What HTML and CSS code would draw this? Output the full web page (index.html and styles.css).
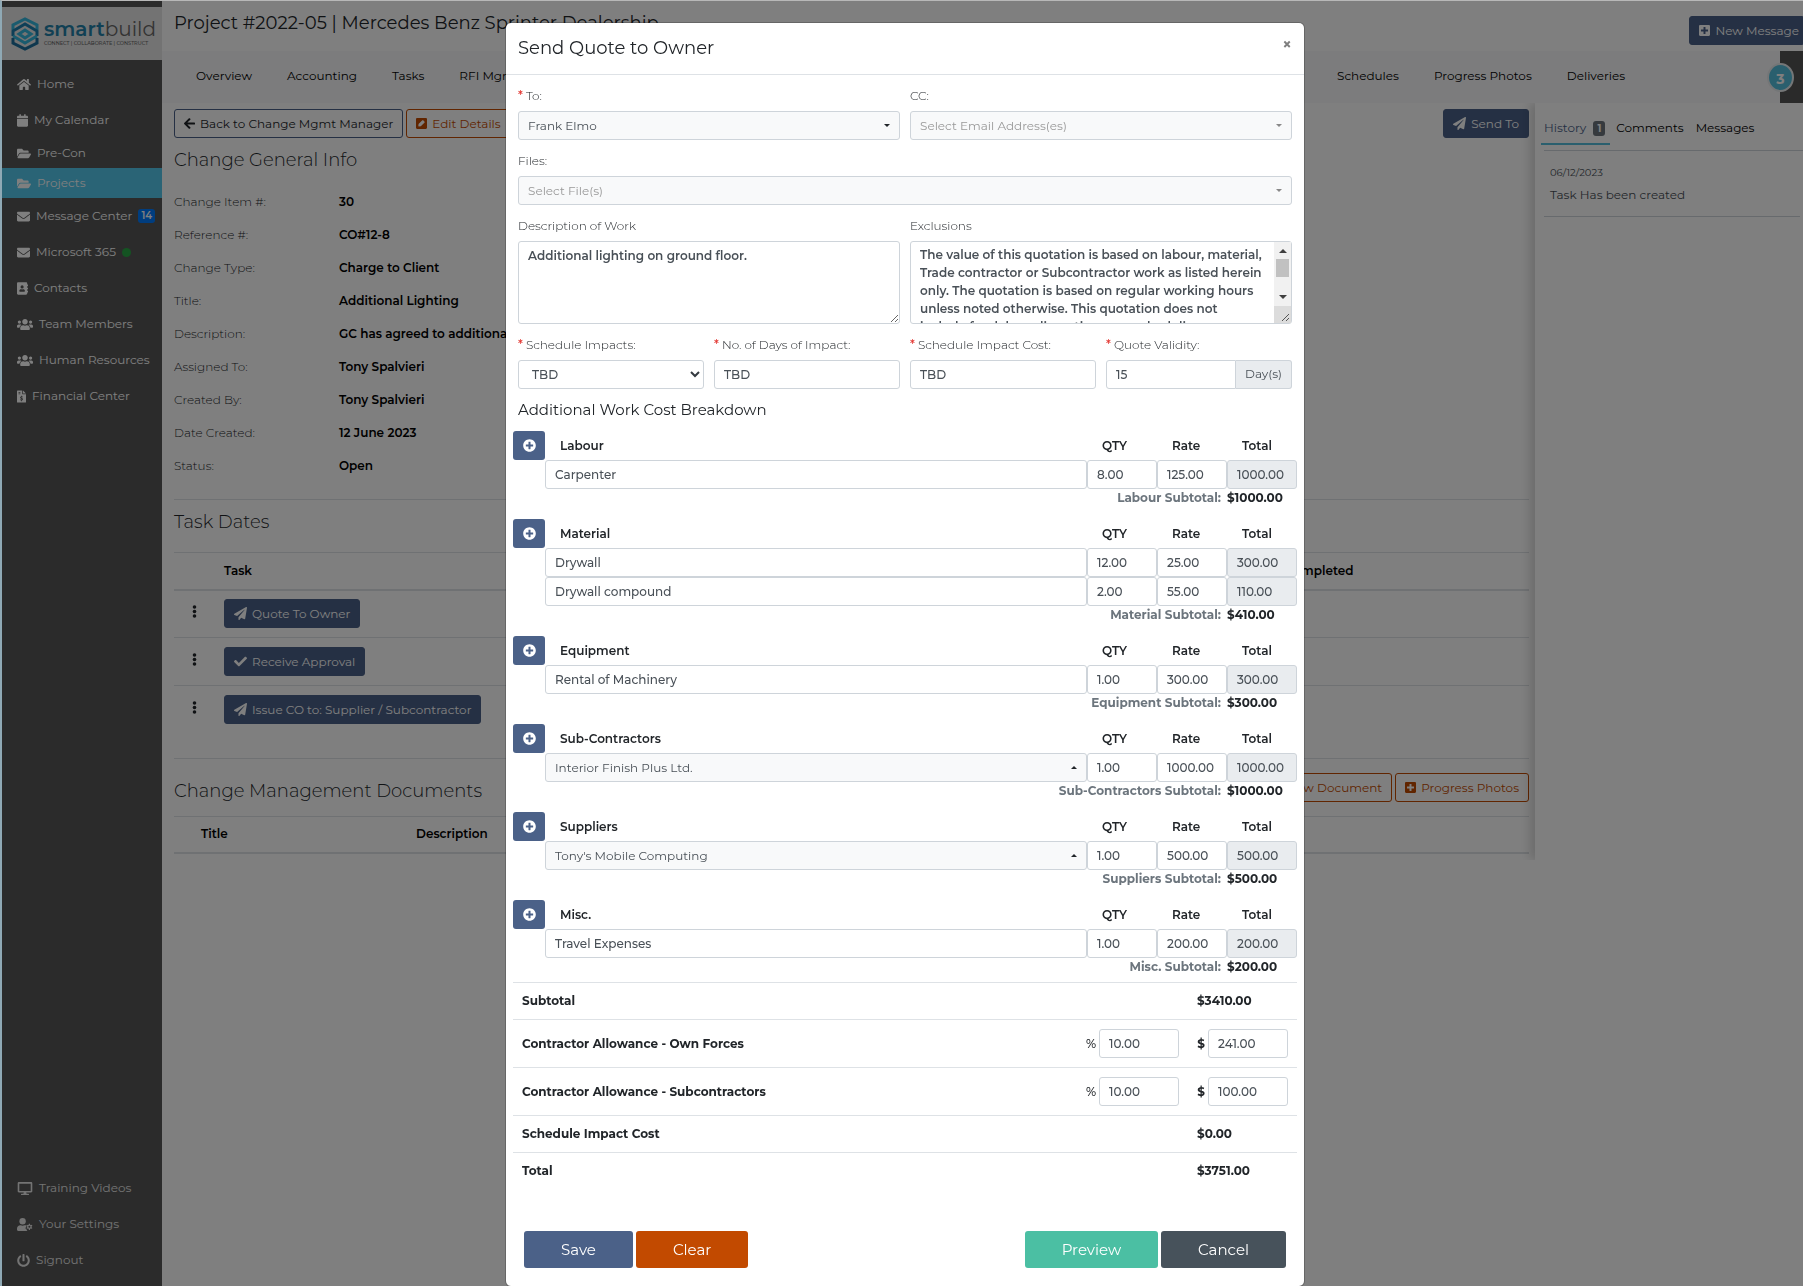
FILE: index.html
```html
<!DOCTYPE html>
<html lang="en">
<head>
<meta charset="UTF-8">
<meta name="viewport" content="width=device-width, initial-scale=1">
<title>Smartbuild - Send Quote to Owner</title>
<link rel="stylesheet" href="styles.css">
</head>
<body>
<svg class="sprite" aria-hidden="true">
    <symbol id="i-home" viewBox="0 0 576 512"><path d="M280.37 148.26L96 300.11V464a16 16 0 0 0 16 16l112.06-.29a16 16 0 0 0 15.92-16V368a16 16 0 0 1 16-16h64a16 16 0 0 1 16 16v95.64a16 16 0 0 0 16 16.05L464 480a16 16 0 0 0 16-16V300L295.67 148.26a12.19 12.19 0 0 0-15.3 0zM571.6 251.47L488 182.56V44.05a12 12 0 0 0-12-12h-56a12 12 0 0 0-12 12v72.61L318.47 43a48 48 0 0 0-61 0L4.34 251.47a12 12 0 0 0-1.6 16.9l25.5 31A12 12 0 0 0 45.15 301l235.22-193.74a12.19 12.19 0 0 1 15.3 0L530.9 301a12 12 0 0 0 16.9-1.6l25.5-31a12 12 0 0 0-1.7-16.93z"/></symbol>
    <symbol id="i-calendar" viewBox="0 0 448 512"><path d="M12 192h424c6.6 0 12 5.4 12 12v260c0 26.5-21.5 48-48 48H48c-26.5 0-48-21.5-48-48V204c0-6.6 5.4-12 12-12zm436-44v-36c0-26.5-21.5-48-48-48h-48V12c0-6.6-5.4-12-12-12h-40c-6.6 0-12 5.4-12 12v52H160V12c0-6.6-5.4-12-12-12h-40c-6.6 0-12 5.4-12 12v52H48C21.5 64 0 85.5 0 112v36c0 6.6 5.4 12 12 12h424c6.6 0 12-5.4 12-12z"/></symbol>
    <symbol id="i-folder" viewBox="0 0 576 512"><path d="M572.694 292.093L500.27 416.248A63.997 63.997 0 0 1 444.989 448H45.025c-18.523 0-30.064-20.093-20.731-36.093l72.424-124.155A64 64 0 0 1 152 256h399.964c18.523 0 30.064 20.093 20.73 36.093zM152 224h328v-48c0-26.51-21.49-48-48-48H272l-64-64H48C21.49 64 0 85.49 0 112v278.046l69.077-118.418C86.214 242.25 117.989 224 152 224z"/></symbol>
    <symbol id="i-envelope" viewBox="0 0 512 512"><path d="M502.3 190.8c3.9-3.1 9.7-.2 9.7 4.7V400c0 26.5-21.5 48-48 48H48c-26.5 0-48-21.5-48-48V195.6c0-5 5.7-7.8 9.7-4.7 22.4 17.4 52.1 39.5 154.1 113.6 21.1 15.4 56.7 47.8 92.2 47.6 35.7.3 72-32.8 92.3-47.6 102-74.1 131.6-96.3 154-113.7zM256 320c23.2.4 56.6-29.2 73.4-41.4 132.7-96.3 142.8-104.7 173.4-128.7 5.8-4.5 9.2-11.5 9.2-18.9v-19c0-26.5-21.5-48-48-48H48c-26.5 0-48 21.5-48 48v19c0 7.4 3.4 14.3 9.2 18.9 30.6 23.9 40.7 32.4 173.4 128.7 16.8 12.2 50.2 41.8 73.4 41.4z"/></symbol>
    <symbol id="i-book" viewBox="0 0 448 512"><path fill-rule="evenodd" d="M48 0h320c26 0 48 22 48 48v48h20c7 0 12 5 12 12v40c0 7-5 12-12 12h-20v64h20c7 0 12 5 12 12v40c0 7-5 12-12 12h-20v64h20c7 0 12 5 12 12v40c0 7-5 12-12 12h-20v48c0 26-22 48-48 48H48c-26 0-48-22-48-48V48C0 22 22 0 48 0zm160 128a64 64 0 1 0 0 128 64 64 0 0 0 0-128zM119 384h178c12 0 23-9 23-19v-19c0-32-30-58-67-58-10 0-19 8-45 8s-34-8-45-8c-37 0-67 26-67 58v19c0 10 10 19 23 19z"/></symbol>
    <symbol id="i-users" viewBox="0 0 640 512"><path d="M96 224c35.3 0 64-28.7 64-64s-28.7-64-64-64-64 28.7-64 64 28.7 64 64 64zm448 0c35.3 0 64-28.7 64-64s-28.7-64-64-64-64 28.7-64 64 28.7 64 64 64zm32 32h-64c-17.6 0-33.5 7.1-45.1 18.6 40.3 22.1 68.9 62 75.1 109.4h66c17.7 0 32-14.3 32-32v-32c0-35.3-28.7-64-64-64zm-256 0c61.9 0 112-50.1 112-112S381.9 32 320 32 208 82.1 208 144s50.1 112 112 112zm76.8 32h-8.3c-20.8 10-43.9 16-68.5 16s-47.6-6-68.5-16h-8.3C179.6 288 128 339.6 128 403.2V432c0 26.5 21.5 48 48 48h288c26.5 0 48-21.5 48-48v-28.8c0-63.6-51.6-115.2-115.2-115.2zm-223.7-13.4C161.5 263.1 145.6 256 128 256H64c-35.3 0-64 28.7-64 64v32c0 17.7 14.3 32 32 32h65.9c6.3-47.4 34.9-87.3 75.2-109.4z"/></symbol>
    <symbol id="i-invoice" viewBox="0 0 384 512"><path fill-rule="evenodd" d="M24 0h200v136c0 13 11 24 24 24h136v328c0 13-11 24-24 24H24c-13 0-24-11-24-24V24C0 11 11 0 24 0zm232 0l128 128H256zM64 64v32h80V64zm0 64v32h80v-32zm112 96v32c-50 6-60 84 0 100 40 12 26 32 8 32-16 0-24-8-36-12l-18 30c14 12 28 16 46 18v30h32v-30c56-8 62-86 2-104-38-10-30-30-10-30 14 0 22 6 32 10l18-30c-12-8-26-12-42-14v-32z"/></symbol>
    <symbol id="i-desktop" viewBox="0 0 576 512"><path d="M528 0H48C21.5 0 0 21.5 0 48v320c0 26.5 21.5 48 48 48h192l-16 48h-72c-13.3 0-24 10.7-24 24s10.7 24 24 24h272c13.3 0 24-10.7 24-24s-10.7-24-24-24h-72l-16-48h192c26.5 0 48-21.5 48-48V48c0-26.5-21.5-48-48-48zm-16 352H64V64h448v288z"/></symbol>
    <symbol id="i-usercog" viewBox="0 0 640 512"><circle cx="224" cy="128" r="128"/><path d="M314 288h-9c-50 24-112 24-163 0h-8C60 288 0 348 0 422v42c0 26 22 48 48 48h352c8 0 15-2 21-5-24-14-40-40-40-64l-30-16c-16-12-12-40 14-82 4-8 10-14 16-20l-6-30c-18-5-38-7-61-7z"/><path fill-rule="evenodd" d="M474 224h44l8 42 26 15 40-14 22 38-32 28v30l32 28-22 38-40-14-26 15-8 42h-44l-8-42-26-15-40 14-22-38 32-28v-30l-32-28 22-38 40 14 26-15zm22 82a42 42 0 1 0 0 84 42 42 0 0 0 0-84z"/></symbol>
    <symbol id="i-power" viewBox="0 0 512 512"><path d="M400 54.1c63 45 104 118.6 104 201.9 0 136.8-110.8 247.7-247.5 248C120 504.3 8.2 393 8 256.4 7.9 173.1 48.9 99.3 111.8 54.2c11.7-8.3 28-4.8 35 7.7L162.6 90c5.9 10.5 3.1 23.8-6.6 31-41.5 30.8-68 79.6-68 134.9-.1 92.3 74.5 168.1 168 168.1 91.6 0 168.6-74.2 168-169.1-.3-51.8-24.7-101.8-68.1-134-9.7-7.2-12.4-20.5-6.5-30.9l15.8-28.1c7-12.4 23.2-16.1 34.8-7.8zM296 264V24c0-13.3-10.7-24-24-24h-32c-13.3 0-24 10.7-24 24v240c0 13.3 10.7 24 24 24h32c13.3 0 24-10.7 24-24z"/></symbol>
    <symbol id="i-arrow" viewBox="0 0 448 512"><path d="M257.5 445.1l-22.2 22.2c-9.4 9.4-24.6 9.4-33.9 0L7 273c-9.4-9.4-9.4-24.6 0-33.9L201.4 44.7c9.4-9.4 24.6-9.4 33.9 0l22.2 22.2c9.5 9.5 9.3 25-.4 34.3L136.6 216H424c13.3 0 24 10.7 24 24v32c0 13.3-10.7 24-24 24H136.6l120.5 114.8c9.8 9.3 10 24.8.4 34.3z"/></symbol>
    <symbol id="i-pen" viewBox="0 0 448 512"><path fill-rule="evenodd" d="M48 32h352c26 0 48 22 48 48v352c0 26-22 48-48 48H48c-26 0-48-22-48-48V80c0-26 22-48 48-48zm190 115L104 281l-8 80c-1 12 8 21 19 20l80-9 134-134zm111 36l-56-56c-10-10-26-10-36 0l-18 18 91 91 19-18c10-10 10-25 0-35z"/></symbol>
    <symbol id="i-plane" viewBox="0 0 512 512"><path d="M476 3.2L12.5 270.6c-18.1 10.4-15.8 35.6 2.2 43.2L121 358.4l287.3-253.2c5.5-4.9 13.3 2.6 8.6 8.3L176 407v80.5c0 23.6 28.5 32.9 42.5 15.8L282 426l124.6 52.2c14.2 6 30.4-2.9 33-18.2l72-432C515 7.8 493.3-6.8 476 3.2z"/></symbol>
    <symbol id="i-check" viewBox="0 0 512 512"><path d="M173.898 439.404l-166.4-166.4c-9.997-9.997-9.997-26.206 0-36.204l36.203-36.204c9.997-9.998 26.207-9.998 36.204 0L192 312.69 432.095 72.596c9.997-9.997 26.207-9.997 36.204 0l36.203 36.204c9.997 9.997 9.997 26.206 0 36.204l-294.4 294.401c-9.998 9.997-26.207 9.997-36.204-.001z"/></symbol>
    <symbol id="i-plus-square" viewBox="0 0 448 512"><path d="M400 32H48C21.5 32 0 53.5 0 80v352c0 26.5 21.5 48 48 48h352c26.5 0 48-21.5 48-48V80c0-26.5-21.5-48-48-48zm-32 252c0 6.6-5.4 12-12 12h-92v92c0 6.6-5.4 12-12 12h-56c-6.6 0-12-5.4-12-12v-92H92c-6.6 0-12-5.4-12-12v-56c0-6.6 5.4-12 12-12h92v-92c0-6.6 5.4-12 12-12h56c6.6 0 12 5.4 12 12v92h92c6.6 0 12 5.4 12 12v56z"/></symbol>
    <symbol id="i-plus-circle" viewBox="0 0 512 512"><path d="M256 8C119 8 8 119 8 256s111 248 248 248 248-111 248-248S393 8 256 8zm144 276c0 6.6-5.4 12-12 12h-92v92c0 6.6-5.4 12-12 12h-56c-6.6 0-12-5.4-12-12v-92h-92c-6.6 0-12-5.4-12-12v-56c0-6.6 5.4-12 12-12h92v-92c0-6.6 5.4-12 12-12h56c6.6 0 12 5.4 12 12v92h92c6.6 0 12 5.4 12 12v56z"/></symbol>
    <symbol id="i-dots" viewBox="0 0 192 512"><circle cx="96" cy="80" r="72"/><circle cx="96" cy="256" r="72"/><circle cx="96" cy="432" r="72"/></symbol>
</svg>

<div class="app">
    <aside class="sidebar">
        <a class="logo" href="#">
            <svg class="logo-mark" viewBox="0 0 28 34" aria-hidden="true">
                <g fill="none" stroke-width="3">
                    <path stroke="#35b6dd" d="M2 13V8l12-6 12 6v5"/>
                    <path stroke="#1d7fae" d="M2 19v-5l12-7 12 7v5"/>
                    <path stroke="#35b6dd" d="M8 17l6-4 6 4-6 4z"/>
                    <path stroke="#35b6dd" d="M2 19l12 7 12-7"/>
                    <path stroke="#1d6f9c" d="M2 21v5l12 6 12-6v-5"/>
                </g>
            </svg>
            <span class="logo-text">
                <span class="logo-name"><b>smart</b>build</span>
                <span class="logo-tag">CONNECT | COLLABORATE | CONSTRUCT</span>
            </span>
        </a>
        <nav class="menu">
            <a href="#"><svg class="icon w14"><use href="#i-home"/></svg>Home</a>
            <a href="#"><svg class="icon w11"><use href="#i-calendar"/></svg>My Calendar</a>
            <a href="#" class="short"><svg class="icon w14"><use href="#i-folder"/></svg>Pre-Con</a>
            <a href="#" class="short active"><svg class="icon w14"><use href="#i-folder"/></svg>Projects</a>
            <a href="#"><svg class="icon w13"><use href="#i-envelope"/></svg>Message Center <span class="count">14</span></a>
            <a href="#"><svg class="icon w13"><use href="#i-envelope"/></svg>Microsoft 365 <span class="online"></span></a>
            <a href="#"><svg class="icon w11"><use href="#i-book"/></svg>Contacts</a>
            <a href="#"><svg class="icon w16"><use href="#i-users"/></svg>Team Members</a>
            <a href="#"><svg class="icon w16"><use href="#i-users"/></svg>Human Resources</a>
            <a href="#"><svg class="icon w9"><use href="#i-invoice"/></svg>Financial Center</a>
        </nav>
        <nav class="menu menu-bottom">
            <a href="#"><svg class="icon w16"><use href="#i-desktop"/></svg>Training Videos</a>
            <a href="#"><svg class="icon w16"><use href="#i-usercog"/></svg>Your Settings</a>
            <a href="#"><svg class="icon w13"><use href="#i-power"/></svg>Signout</a>
        </nav>
    </aside>

    <div class="page">
        <header class="page-head">
            <h1>Project #2022-05 | Mercedes Benz Sprinter Dealership</h1>
            <button class="btn new-message"><svg class="icon w11"><use href="#i-plus-square"/></svg>New Message</button>
        </header>
        <nav class="tabs">
            <div class="tab-group">
                <a href="#">Overview</a>
                <a href="#">Accounting</a>
                <a href="#">Tasks</a>
                <a href="#">RFI Mgmt</a>
            </div>
            <div class="tab-group">
                <a href="#">Schedules</a>
                <a href="#">Progress Photos</a>
                <a href="#">Deliveries</a>
            </div>
            <div class="drawer"><span class="bubble">3</span></div>
        </nav>

        <div class="columns">
            <main class="content">
                <div class="toolbar">
                    <button class="btn btn-outline"><svg class="icon w11"><use href="#i-arrow"/></svg>Back to Change Mgmt Manager</button>
                    <button class="btn btn-orange"><svg class="icon w11"><use href="#i-pen"/></svg>Edit Details</button>
                    <button class="btn push"><svg class="icon w13"><use href="#i-plane"/></svg>Send To</button>
                </div>
                <h2>Change General Info</h2>
                <dl class="info">
                    <dt>Change Item #:</dt><dd>30</dd>
                    <dt>Reference #:</dt><dd>CO#12-8</dd>
                    <dt>Change Type:</dt><dd>Charge to Client</dd>
                    <dt>Title:</dt><dd>Additional Lighting</dd>
                    <dt>Description:</dt><dd>GC has agreed to additional</dd>
                    <dt>Assigned To:</dt><dd>Tony Spalvieri</dd>
                    <dt>Created By:</dt><dd>Tony Spalvieri</dd>
                    <dt>Date Created:</dt><dd>12 June 2023</dd>
                    <dt>Status:</dt><dd>Open</dd>
                </dl>
                <section class="tasks">
                    <h2>Task Dates</h2>
                    <table class="list">
                        <thead>
                            <tr><th class="dots"></th><th>Task</th><th class="done">Completed</th></tr>
                        </thead>
                        <tbody>
                            <tr><td class="dots"><svg class="icon w5"><use href="#i-dots"/></svg></td><td colspan="2"><button class="btn"><svg class="icon w13"><use href="#i-plane"/></svg>Quote To Owner</button></td></tr>
                            <tr><td class="dots"><svg class="icon w5"><use href="#i-dots"/></svg></td><td colspan="2"><button class="btn"><svg class="icon w13"><use href="#i-check"/></svg>Receive Approval</button></td></tr>
                            <tr><td class="dots"><svg class="icon w5"><use href="#i-dots"/></svg></td><td colspan="2"><button class="btn"><svg class="icon w13"><use href="#i-plane"/></svg>Issue CO to: Supplier / Subcontractor</button></td></tr>
                        </tbody>
                    </table>
                </section>
                <section class="docs">
                    <div class="docs-head">
                        <h2>Change Management Documents</h2>
                        <button class="btn btn-orange push"><svg class="icon w11"><use href="#i-plus-square"/></svg>New Document</button>
                        <button class="btn btn-orange"><svg class="icon w11"><use href="#i-plus-square"/></svg>Progress Photos</button>
                    </div>
                    <table class="list">
                        <thead>
                            <tr><th class="doc-title">Title</th><th>Description</th></tr>
                        </thead>
                    </table>
                </section>
            </main>
            <aside class="history">
                <nav class="history-tabs">
                    <a href="#" class="current">History <span class="num">1</span></a>
                    <a href="#">Comments</a>
                    <a href="#">Messages</a>
                </nav>
                <div class="event">
                    <time>06/12/2023</time>
                    <p>Task Has been created</p>
                </div>
            </aside>
        </div>
    </div>
</div>

<div class="backdrop">
    <form class="modal" role="dialog" aria-labelledby="modal-title">
        <header class="modal-head">
            <h2 id="modal-title">Send Quote to Owner</h2>
            <button type="button" class="close" aria-label="Close">×</button>
        </header>
        <div class="fields">
            <div class="field half">
                <label for="to"><i>*</i> To:</label>
                <div class="pick"><select id="to"><option>Frank Elmo</option></select></div>
            </div>
            <div class="field half">
                <label for="cc">CC:</label>
                <div class="pick empty"><select id="cc"><option>Select Email Address(es)</option></select></div>
            </div>
            <div class="field full">
                <label for="files">Files:</label>
                <div class="pick empty"><select id="files"><option>Select File(s)</option></select></div>
            </div>
            <div class="field half">
                <label for="work">Description of Work</label>
                <textarea id="work">Additional lighting on ground floor.</textarea>
            </div>
            <div class="field half">
                <label for="excl">Exclusions</label>
                <div class="scroller">
                    <textarea id="excl">The value of this quotation is based on labour, material, Trade contractor or Subcontractor work as listed herein only. The quotation is based on regular working hours unless noted otherwise. This quotation does not include for delays, disruption, or rescheduling.</textarea>
                    <svg viewBox="0 0 17 81" aria-hidden="true">
                        <path fill="#f1f1f1" d="M0 0h17v64H0z"/>
                        <path fill="#dcdcdc" d="M0 64h17v17H0z"/>
                        <path fill="#c1c1c1" d="M2 17h13v18H2z"/>
                        <path fill="#404040" d="M5 11l4-4 4 4zM5 53l4 4 4-4z"/>
                        <path stroke="#555" d="M8 79l7-7M12 79l3-3"/>
                    </svg>
                </div>
            </div>
            <div class="field">
                <label for="impacts"><i>*</i> Schedule Impacts:</label>
                <div class="native">
                    <select id="impacts"><option>TBD</option></select>
                    <svg viewBox="0 0 10 7" aria-hidden="true"><path d="M1 1l4 4 4-4" fill="none" stroke="#343a40" stroke-width="2"/></svg>
                </div>
            </div>
            <div class="field">
                <label for="days"><i>*</i> No. of Days of Impact:</label>
                <input id="days" type="text" value="TBD">
            </div>
            <div class="field">
                <label for="cost"><i>*</i> Schedule Impact Cost:</label>
                <input id="cost" type="text" value="TBD">
            </div>
            <div class="field">
                <label for="validity"><i>*</i> Quote Validity:</label>
                <div class="with-unit"><input id="validity" type="text" value="15"><span class="unit">Day(s)</span></div>
            </div>
        </div>

        <h3>Additional Work Cost Breakdown</h3>
        <div class="costs">
            <table class="cost">
                <colgroup><col class="c-add"><col><col class="c-num"><col class="c-num"><col class="c-num"></colgroup>
                <thead><tr><th><button type="button" class="add" aria-label="Add labour"><svg class="icon w13"><use href="#i-plus-circle"/></svg></button></th><th>Labour</th><th>QTY</th><th>Rate</th><th>Total</th></tr></thead>
                <tbody>
                    <tr><td></td><td><input aria-label="Labour" value="Carpenter"></td><td><input aria-label="Qty" value="8.00"></td><td><input aria-label="Rate" value="125.00"></td><td><input aria-label="Total" value="1000.00" readonly></td></tr>
                </tbody>
                <tfoot><tr><td colspan="4">Labour Subtotal:</td><td class="sum">$1000.00</td></tr></tfoot>
            </table>
            <table class="cost">
                <colgroup><col class="c-add"><col><col class="c-num"><col class="c-num"><col class="c-num"></colgroup>
                <thead><tr><th><button type="button" class="add" aria-label="Add material"><svg class="icon w13"><use href="#i-plus-circle"/></svg></button></th><th>Material</th><th>QTY</th><th>Rate</th><th>Total</th></tr></thead>
                <tbody>
                    <tr><td></td><td><input aria-label="Material" value="Drywall"></td><td><input aria-label="Qty" value="12.00"></td><td><input aria-label="Rate" value="25.00"></td><td><input aria-label="Total" value="300.00" readonly></td></tr>
                    <tr><td></td><td><input aria-label="Material" value="Drywall compound"></td><td><input aria-label="Qty" value="2.00"></td><td><input aria-label="Rate" value="55.00"></td><td><input aria-label="Total" value="110.00" readonly></td></tr>
                </tbody>
                <tfoot><tr><td colspan="4">Material Subtotal:</td><td class="sum">$410.00</td></tr></tfoot>
            </table>
            <table class="cost">
                <colgroup><col class="c-add"><col><col class="c-num"><col class="c-num"><col class="c-num"></colgroup>
                <thead><tr><th><button type="button" class="add" aria-label="Add equipment"><svg class="icon w13"><use href="#i-plus-circle"/></svg></button></th><th>Equipment</th><th>QTY</th><th>Rate</th><th>Total</th></tr></thead>
                <tbody>
                    <tr><td></td><td><input aria-label="Equipment" value="Rental of Machinery"></td><td><input aria-label="Qty" value="1.00"></td><td><input aria-label="Rate" value="300.00"></td><td><input aria-label="Total" value="300.00" readonly></td></tr>
                </tbody>
                <tfoot><tr><td colspan="4">Equipment Subtotal:</td><td class="sum">$300.00</td></tr></tfoot>
            </table>
            <table class="cost">
                <colgroup><col class="c-add"><col><col class="c-num"><col class="c-num"><col class="c-num"></colgroup>
                <thead><tr><th><button type="button" class="add" aria-label="Add sub-contractor"><svg class="icon w13"><use href="#i-plus-circle"/></svg></button></th><th>Sub-Contractors</th><th>QTY</th><th>Rate</th><th>Total</th></tr></thead>
                <tbody>
                    <tr><td></td><td><div class="pick up"><select aria-label="Sub-contractor"><option>Interior Finish Plus Ltd.</option></select></div></td><td><input aria-label="Qty" value="1.00"></td><td><input aria-label="Rate" value="1000.00"></td><td><input aria-label="Total" value="1000.00" readonly></td></tr>
                </tbody>
                <tfoot><tr><td colspan="4">Sub-Contractors Subtotal:</td><td class="sum">$1000.00</td></tr></tfoot>
            </table>
            <table class="cost">
                <colgroup><col class="c-add"><col><col class="c-num"><col class="c-num"><col class="c-num"></colgroup>
                <thead><tr><th><button type="button" class="add" aria-label="Add supplier"><svg class="icon w13"><use href="#i-plus-circle"/></svg></button></th><th>Suppliers</th><th>QTY</th><th>Rate</th><th>Total</th></tr></thead>
                <tbody>
                    <tr><td></td><td><div class="pick up"><select aria-label="Supplier"><option>Tony's Mobile Computing</option></select></div></td><td><input aria-label="Qty" value="1.00"></td><td><input aria-label="Rate" value="500.00"></td><td><input aria-label="Total" value="500.00" readonly></td></tr>
                </tbody>
                <tfoot><tr><td colspan="4">Suppliers Subtotal:</td><td class="sum">$500.00</td></tr></tfoot>
            </table>
            <table class="cost">
                <colgroup><col class="c-add"><col><col class="c-num"><col class="c-num"><col class="c-num"></colgroup>
                <thead><tr><th><button type="button" class="add" aria-label="Add misc."><svg class="icon w13"><use href="#i-plus-circle"/></svg></button></th><th>Misc.</th><th>QTY</th><th>Rate</th><th>Total</th></tr></thead>
                <tbody>
                    <tr><td></td><td><input aria-label="Misc." value="Travel Expenses"></td><td><input aria-label="Qty" value="1.00"></td><td><input aria-label="Rate" value="200.00"></td><td><input aria-label="Total" value="200.00" readonly></td></tr>
                </tbody>
                <tfoot><tr><td colspan="4">Misc. Subtotal:</td><td class="sum">$200.00</td></tr></tfoot>
            </table>

            <table class="totals">
                <tr><th>Subtotal</th><td class="pct"></td><td class="amt">$3410.00</td></tr>
                <tr class="tall"><th>Contractor Allowance - Own Forces</th><td class="pct"><label>% <input value="10.00"></label></td><td class="amt"><label>$ <input value="241.00"></label></td></tr>
                <tr class="tall"><th>Contractor Allowance - Subcontractors</th><td class="pct"><label>% <input value="10.00"></label></td><td class="amt"><label>$ <input value="100.00"></label></td></tr>
                <tr><th>Schedule Impact Cost</th><td class="pct"></td><td class="amt">$0.00</td></tr>
                <tr><th>Total</th><td class="pct"></td><td class="amt">$3751.00</td></tr>
            </table>
        </div>

        <footer class="modal-foot">
            <button type="button" class="big save">Save</button>
            <button type="button" class="big clear">Clear</button>
            <button type="button" class="big preview">Preview</button>
            <button type="button" class="big cancel">Cancel</button>
        </footer>
    </form>
</div>
</body>
</html>
```
FILE: styles.css
```css
* {
    box-sizing: border-box;
}
body {
    margin: 0;
    font-family: Montserrat, Inter, "Open Sans", sans-serif;
    font-size: 12px;
    line-height: 18px;
    color: #212529;
    background: #fff;
    overflow: hidden;
}
h1, h2, h3, p, dl, dd {
    margin: 0;
}
a {
    color: inherit;
    text-decoration: none;
}
button, input, select, textarea {
    font: inherit;
    color: inherit;
    margin: 0;
}
.sprite {
    display: none;
}
.icon {
    height: 13px;
    flex: none;
    fill: currentColor;
}
.w5 { width: 5px; }
.w9 { width: 9px; }
.w11 { width: 11px; }
.w13 { width: 13px; }
.w14 { width: 14px; }
.w16 { width: 16px; }

.app {
    display: flex;
    height: 100vh;
}

/* sidebar */
.sidebar {
    display: flex;
    flex-direction: column;
    flex: none;
    width: 162px;
    padding: 7px 0 8px 2px;
    background: #575757;
    color: #fff;
}
.logo {
    display: flex;
    align-items: center;
    gap: 5px;
    height: 53px;
    padding: 0 9px;
    background: #e6e6e6;
    margin-bottom: 6px;
}
.logo-mark {
    width: 28px;
    height: 34px;
    flex: none;
}
.logo-text {
    display: flex;
    flex-direction: column;
    color: #666;
}
.logo-name {
    font-size: 20px;
    line-height: 19px;
}
.logo-name b {
    font-weight: 600;
    color: #2380a8;
}
.logo-tag {
    font-size: 5px;
    font-weight: 500;
    line-height: 8px;
    white-space: nowrap;
}
.menu a {
    display: flex;
    align-items: center;
    gap: 6px;
    height: 36px;
    padding-left: 15px;
    white-space: nowrap;
}
.menu a.short {
    height: 30px;
}
.menu a.active {
    background: #54c8ec;
}
.menu-bottom {
    margin-top: auto;
    opacity: 0.85;
}
.count {
    padding: 0 3px;
    border-radius: 3px;
    background: #007bff;
    font-size: 10px;
    font-weight: 600;
    line-height: 14px;
}
.online {
    width: 9px;
    height: 9px;
    border-radius: 50%;
    background: #28a745;
}

/* page */
.page {
    flex: 1;
    min-width: 0;
}
.page-head {
    display: flex;
    justify-content: space-between;
    height: 51px;
    padding-left: 12px;
}
h1 {
    padding-top: 11px;
    font-size: 18px;
    line-height: 24px;
    font-weight: 400;
}
h2 {
    font-size: 18px;
    line-height: 24px;
    font-weight: 300;
}
.btn {
    display: inline-flex;
    align-items: center;
    gap: 5px;
    height: 29px;
    padding: 0 9px;
    border: 1px solid #4b6188;
    border-radius: 3px;
    background: #4b6188;
    color: #fff;
    white-space: nowrap;
}
.btn-outline {
    background: none;
    color: #212529;
}
.btn-orange {
    background: none;
    border-color: #c24a00;
    color: #c24a00;
}
.push {
    margin-left: auto;
}
.new-message {
    margin-top: 16px;
    padding-right: 3px;
    border-radius: 3px 0 0 3px;
}
.tabs {
    display: flex;
    align-items: center;
    height: 52px;
    padding-left: 34px;
    background: #f8f9fa;
    color: #000;
}
.tab-group {
    display: flex;
    gap: 35px;
    padding-bottom: 2px;
}
.tab-group + .tab-group {
    margin-left: auto;
}
.drawer {
    width: 23px;
    height: 52px;
    margin-left: 155px;
    background: #555;
    position: relative;
}
.bubble {
    position: absolute;
    left: -13px;
    top: 12px;
    width: 27px;
    height: 29px;
    border: 2px solid #e9ecef;
    border-radius: 50%;
    background: #54bfdc;
    color: #fff;
    font-size: 14px;
    font-weight: 700;
    line-height: 29px;
    text-align: center;
}
.columns {
    display: flex;
    align-items: flex-start;
}
.content {
    flex: 1;
    min-width: 0;
    padding: 6px 6px 0 12px;
}
.toolbar {
    display: flex;
    gap: 3px;
    margin-bottom: 10px;
}
.info {
    display: grid;
    grid-template-columns: 165px 1fr;
    margin-top: 13px;
    padding-bottom: 17px;
    line-height: 33px;
    border-bottom: 1px solid #dee2e6;
}
.info dt {
    font-weight: 300;
}
.info dd {
    font-weight: 600;
    color: #000;
}
.tasks {
    padding: 10px 0 24px;
    border-bottom: 1px solid #dee2e6;
}
.tasks h2 {
    margin-bottom: 18px;
}
.list {
    width: 100%;
    border-collapse: collapse;
    text-align: left;
}
.list th {
    height: 37px;
    padding: 0;
    border-top: 1px solid #dee2e6;
    border-bottom: 2px solid #dee2e6;
    font-weight: 600;
    color: #000;
}
.list td {
    height: 48px;
    padding: 0;
    border-top: 1px solid #dee2e6;
}
.list .dots {
    width: 50px;
    padding-left: 18px;
}
.list .done {
    width: 244px;
}
.list .doc-title {
    width: 242px;
    padding-left: 27px;
}
.docs {
    padding-top: 14px;
}
.docs-head {
    display: flex;
    align-items: center;
    gap: 3px;
    margin-bottom: 13px;
}
.docs-head h2 {
    padding-top: 6px;
}
.history {
    flex: none;
    width: 268px;
    min-height: 757px;
    padding-left: 6px;
    box-shadow: -5px 0 10px rgba(0, 0, 0, 0.16);
    clip-path: inset(0 0 0 -16px);
}
.history-tabs {
    display: flex;
    align-items: flex-start;
    height: 48px;
    padding-top: 16px;
    margin-left: 3px;
    border-bottom: 1px solid #ced4da;
    color: #000;
}
.history-tabs a {
    padding: 0 6px;
}
.history-tabs a.current {
    margin-left: -3px;
    padding: 0 3px 5px;
    border-bottom: 2px solid #54bfdc;
    color: #4b6188;
}
.num {
    margin: 0 2px 0 4px;
    padding: 1px 4px;
    border-radius: 3px;
    background: #6c757d;
    color: #fff;
    font-size: 10px;
    font-weight: 700;
}
.event {
    margin: 0 3px;
    padding: 12px 6px;
    border-bottom: 1px solid #ced4da;
    color: #495057;
}
.event time {
    font-size: 10px;
}
.event p {
    margin-top: 4px;
}

/* modal */
.backdrop {
    position: fixed;
    inset: 0;
    padding: 22px 0 0 5px;
    border-top: 1px solid #b8b8b8;
    border-left: 2px solid #8fa9b5;
    background: rgba(0, 0, 0, 0.5);
    overflow: hidden;
}
.modal {
    max-width: 798px;
    margin: 0 auto;
    border-radius: 5px;
    background: #fff;
    box-shadow: 0 0 0 1px rgba(0, 0, 0, 0.2);
}
.modal-head {
    display: flex;
    justify-content: space-between;
    align-items: flex-start;
    height: 52px;
    padding: 13px 10px 0 12px;
    border-bottom: 1px solid #dee2e6;
}
.modal-head h2 {
    font-weight: 400;
}
.close {
    padding: 0;
    border: 0;
    background: none;
    width: 14px;
    font-size: 16px;
    line-height: 18px;
    font-weight: 700;
    color: #7f7f7f;
}
.fields {
    display: grid;
    grid-template-columns: repeat(4, 1fr);
    gap: 12px 10px;
    padding: 12px 12px 0;
}
.half {
    grid-column: span 2;
}
.full {
    grid-column: span 4;
}
.field label {
    display: block;
    margin-bottom: 6px;
    font-weight: 300;
}
.field label i {
    font-style: normal;
    font-weight: 500;
    color: #e3342f;
}
.modal input, .modal select, .modal textarea {
    display: block;
    width: 100%;
    height: 29px;
    padding: 4px 9px;
    border: 1px solid #ced4da;
    border-radius: 3px;
    background: #fff;
    color: #495057;
    font-weight: 500;
    appearance: none;
    outline: none;
}
.modal textarea {
    height: 83px;
    padding-top: 5px;
    font-weight: 600;
}
.scroller {
    position: relative;
}
.modal .scroller textarea {
    padding-top: 4px;
    padding-right: 26px;
    overflow: hidden;
}
.scroller svg {
    position: absolute;
    top: 1px;
    right: 1px;
    width: 17px;
    height: 81px;
}
.modal input[readonly] {
    background: #e9ecef;
}
.pick {
    position: relative;
}
.modal .pick select {
    background: #f8f9fa;
    font-weight: 400;
    color: #495057;
}
.modal .pick.empty select {
    color: #999;
}
.pick::after {
    content: "";
    position: absolute;
    right: 10px;
    top: 13px;
    border: 3px solid transparent;
    border-top-color: #212529;
    border-bottom: 0;
}
.pick.empty::after {
    border-top-color: #888;
}
.pick.up::after {
    border: 3px solid transparent;
    border-bottom-color: #212529;
    border-top: 0;
}
.native {
    position: relative;
}
.modal .native select {
    padding-left: 13px;
}
.native svg {
    position: absolute;
    right: 4px;
    top: 11px;
    width: 10px;
    height: 7px;
}
.with-unit {
    display: flex;
}
.modal .with-unit input {
    flex: 1;
    min-width: 0;
    border-radius: 3px 0 0 3px;
}
.unit {
    padding: 4px 9px;
    border: 1px solid #ced4da;
    border-left: 0;
    border-radius: 0 3px 3px 0;
    background: #e9ecef;
    color: #495057;
}
h3 {
    padding: 10px 12px;
    font-size: 15px;
    line-height: 22px;
    font-weight: 400;
}
.costs {
    padding: 0 7px;
}
.cost, .totals {
    width: 100%;
    table-layout: fixed;
    border-spacing: 0;
    text-align: left;
}
.cost {
    margin-bottom: 12px;
}
.c-add {
    width: 32px;
}
.c-num {
    width: 70px;
}
.cost th, .cost td, .totals th, .totals td {
    padding: 0;
    font-weight: 600;
}
.cost th + th {
    padding-left: 15px;
}
.add {
    display: flex;
    align-items: center;
    justify-content: center;
    width: 32px;
    height: 29px;
    padding: 0;
    border: 0;
    border-radius: 3px;
    background: #4b6188;
    color: #fff;
}
.cost tfoot td {
    padding-right: 6px;
    text-align: right;
    color: #6c757d;
}
.cost tfoot td, .totals th, .totals .amt {
    font-weight: 700;
}
.cost tfoot .sum {
    padding: 0;
    text-align: left;
    color: #212529;
}
.cost:nth-last-child(2) {
    margin-bottom: 6px;
}
.totals th, .totals td {
    height: 37px;
    border-top: 1px solid #dee2e6;
}
.totals th {
    padding-left: 9px;
}
.totals .tall th, .totals .tall td {
    height: 48px;
}
.totals .pct {
    width: 112px;
    font-weight: 500;
}
.totals .amt {
    width: 100px;
}
.totals label {
    display: flex;
    align-items: center;
    justify-content: flex-end;
    gap: 3px;
    padding-right: 18px;
}
.totals .amt label {
    padding-right: 9px;
}
.modal .totals input {
    width: 80px;
}
.modal-foot {
    display: flex;
    gap: 3px;
    padding: 42px 18px 18px;
}
.big {
    height: 37px;
    padding: 0 37px;
    border: 0;
    border-radius: 3px;
    color: #fff;
    font-size: 15px;
}
.save { background: #4b6188; }
.clear { background: #c24a00; }
.preview { background: #4bbfa3; margin-left: auto; }
.cancel { background: #47525b; }
```
